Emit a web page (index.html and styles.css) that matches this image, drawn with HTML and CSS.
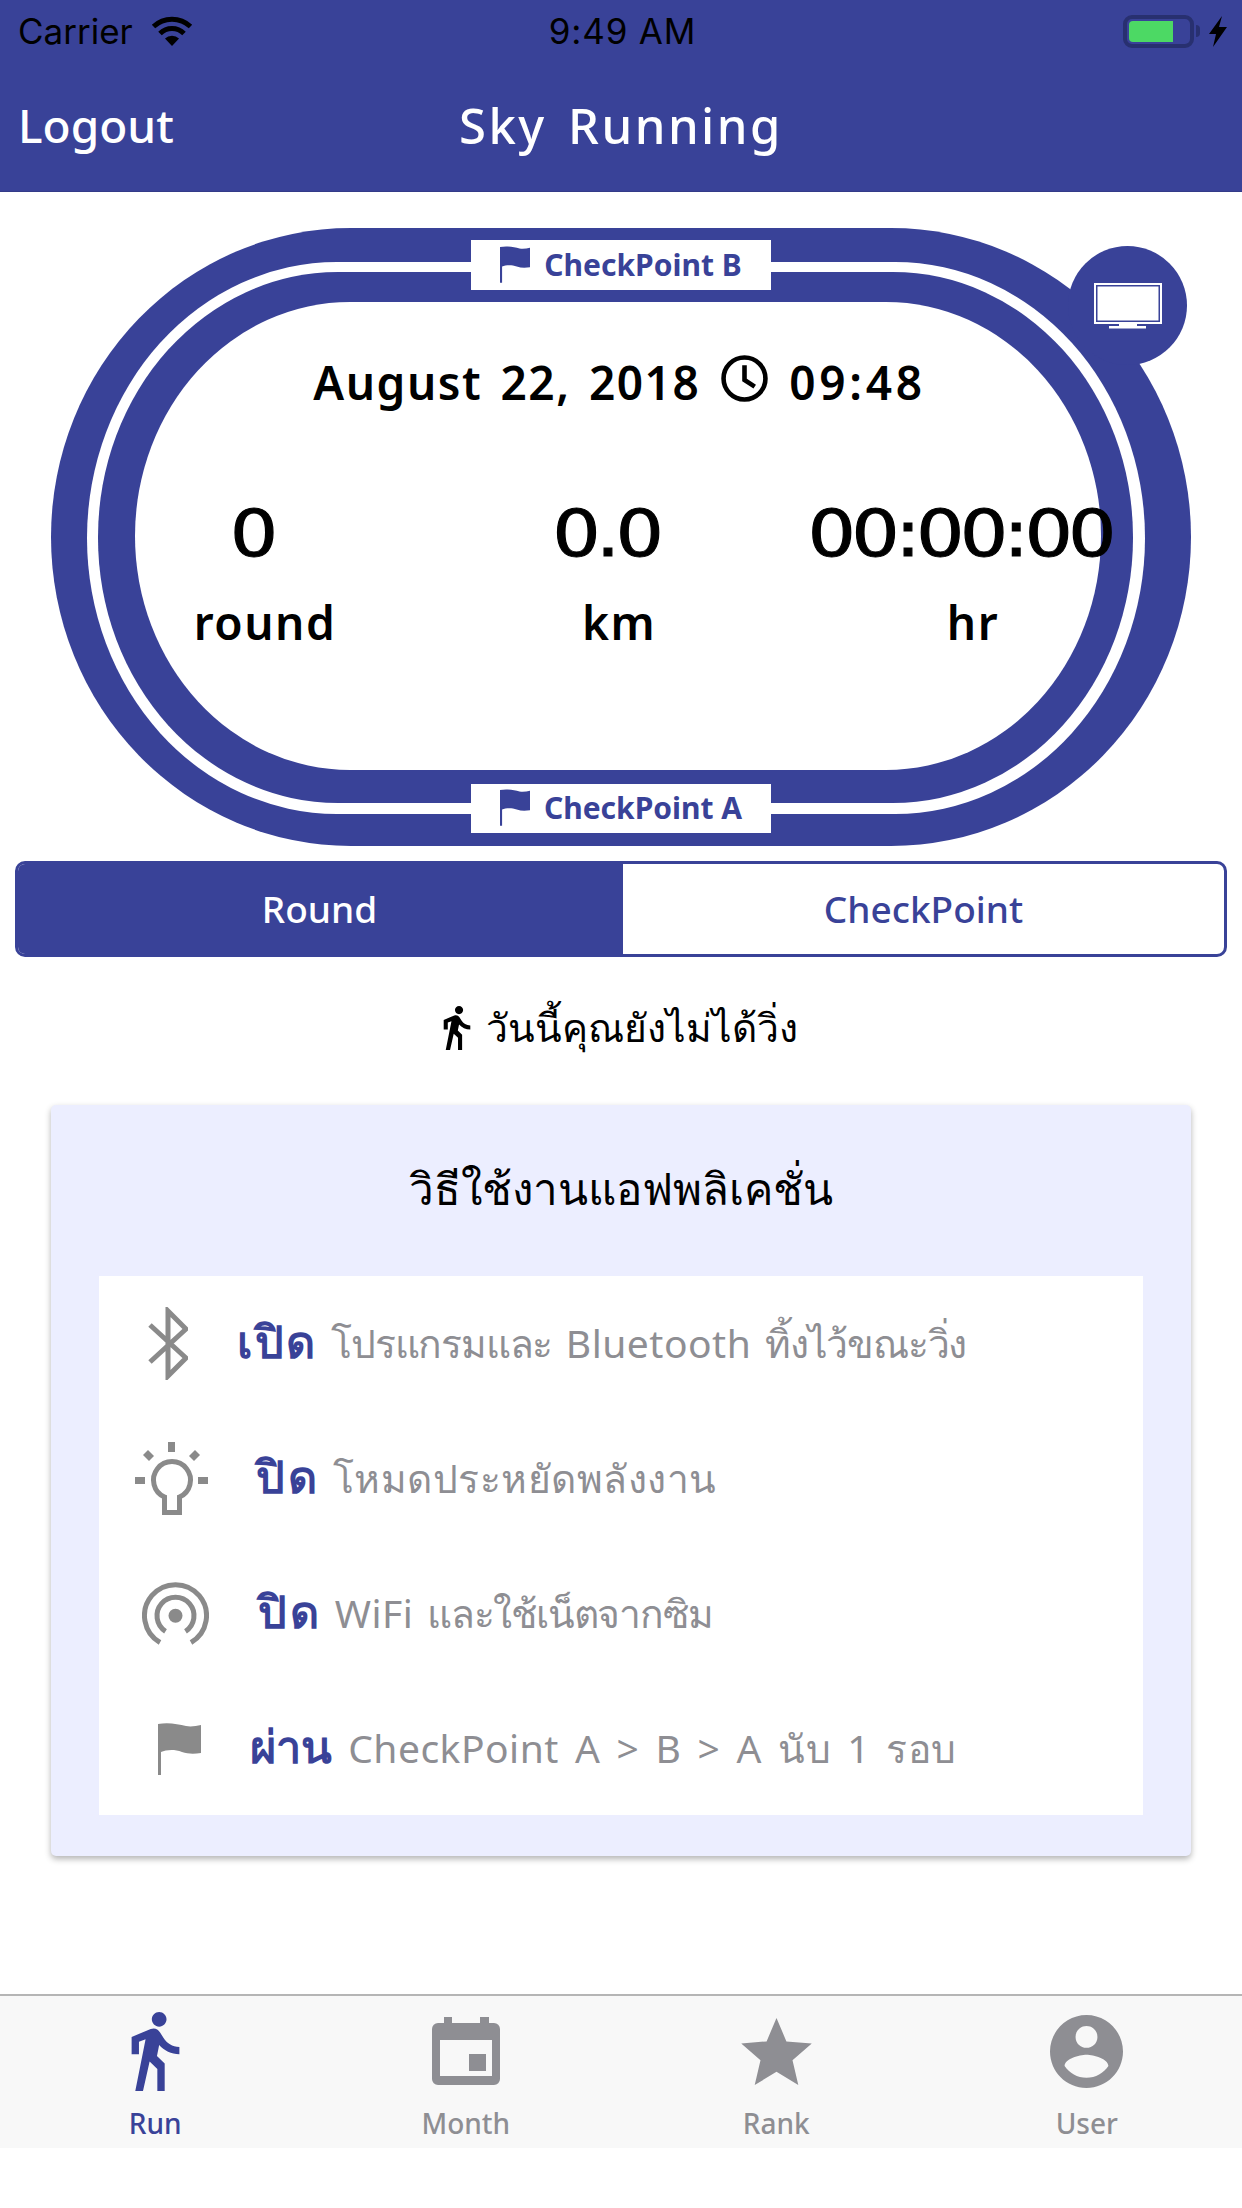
FILE: index.html
```html
<!DOCTYPE html>
<html lang="th">
<head>
  <meta charset="UTF-8">
  <meta name="viewport" content="width=device-width, initial-scale=1.0">
  <title>Sky Running</title>
  <link rel="stylesheet" href="styles.css">
</head>
<body>

<svg class="defs" width="0" height="0">
  <symbol id="walk" viewBox="6 1.5 13 21.5">
    <path d="M13.5 5.5c1.1 0 2-.9 2-2s-.9-2-2-2-2 .9-2 2 .9 2 2 2zM9.8 8.9L7 23h2.1l1.8-8 2.1 2v6h2v-7.5l-2.1-2 .6-3C14.8 12 16.8 13 19 13v-2c-1.9 0-3.5-1-4.3-2.4l-1-1.6c-.4-.6-1-1-1.7-1-.3 0-.5.1-.8.1L6 8.3V13h2V9.6l1.8-.7"/>
  </symbol>
  <symbol id="flag" viewBox="0 0 43 52">
    <path d="M0 1C10 -1 20 1 28 3C33 4 38 3 43 2V30C36 31 30 31 24 29C16 26 8 27 3 29V52H1L0 52Z"/>
  </symbol>
</svg>

<div class="page">

  <header class="top">
    <div class="status">
      <div class="status-left">
        <span>Carrier</span>
        <svg class="wifi" viewBox="0 0 42 30">
          <path class="wifi-arc" d="M2.500 10.500A27 27 0 0 1 39.500 10.500"/>
          <path class="wifi-arc" d="M9 17.500A17 17 0 0 1 33 17.500"/>
          <path d="M21 30L14 22.500A10 10 0 0 1 28 22.500Z"/>
        </svg>
      </div>
      <span class="status-time">9:49 AM</span>
      <div class="status-right">
        <div class="battery"><div class="battery-fill"></div></div>
        <div class="battery-nub"></div>
        <svg class="bolt" viewBox="0 0 18 31"><path d="M13 0L0 18H7L4 31L18 11H10Z"/></svg>
      </div>
    </div>
    <div class="navbar">
      <span class="logout">Logout</span>
      <span class="nav-title">Sky Running</span>
      <span></span>
    </div>
  </header>

  <section class="track">
    <svg class="track-bg" viewBox="0 0 1140 618">
      <rect class="blue" x="0" y="0" width="1140" height="618" rx="300" ry="309"/>
      <rect class="white" x="36" y="34" width="1058" height="552" rx="250" ry="276"/>
      <rect class="blue" x="47" y="44" width="1035" height="531" rx="240" ry="265"/>
      <rect class="white" x="84" y="74" width="966" height="468" rx="215" ry="234"/>
    </svg>

    <div class="badge badge-b">
      <svg class="badge-flag"><use href="#flag"/></svg>
      <span>CheckPoint B</span>
    </div>
    <div class="badge badge-a">
      <svg class="badge-flag"><use href="#flag"/></svg>
      <span>CheckPoint A</span>
    </div>

    <div class="screen-btn">
      <svg class="screen-icon" viewBox="0 0 68 46">
        <rect class="screen-frame" x="1" y="1" width="66" height="39"/>
        <rect x="3.500" y="3.500" width="61" height="34"/>
        <rect x="25" y="40" width="18" height="3.500"/>
        <rect x="15" y="43" width="37" height="2.500"/>
      </svg>
    </div>

    <div class="date-line">
      <span>August 22, 2018</span>
      <svg class="clock" viewBox="0 0 46 46">
        <circle cx="23" cy="23" r="20.500"/>
        <path d="M23 10V24.500L33 31"/>
      </svg>
      <span class="date-time">09:48</span>
    </div>

    <div class="stats">
      <div class="stat"><div class="stat-num">0</div><div class="stat-label">round</div></div>
      <div class="stat"><div class="stat-num">0.0</div><div class="stat-label">km</div></div>
      <div class="stat"><div class="stat-num">00:00:00</div><div class="stat-label">hr</div></div>
    </div>
  </section>

  <div class="segment">
    <div class="seg-item seg-active">Round</div>
    <div class="seg-item">CheckPoint</div>
  </div>

  <div class="today">
    <svg class="today-icon"><use href="#walk"/></svg>
    <span>วันนี้คุณยังไม่ได้วิ่ง</span>
  </div>

  <section class="card">
    <h2 class="card-title">วิธีใช้งานแอฟพลิเคชั่น</h2>
    <div class="howto">
      <div class="row row-bt">
        <svg class="row-icon icon-bt" viewBox="0 0 41 73">
          <path d="M3 18L39 51L21 69V4L39 22L3 55"/>
        </svg>
        <p><b>เปิด</b> <span class="tight">โปรแกรมและ</span> Bluetooth <span class="tight">ทิ้งไว้ขณะวิ่ง</span></p>
      </div>
      <div class="row row-bulb">
        <svg class="row-icon icon-bulb" viewBox="0 0 73 73">
          <path class="line" d="M29.500 70.500V55A18.500 18.500 0 1 1 44.500 55V70.500Z"/>
          <rect x="33" y="0" width="7" height="10"/>
          <rect x="0" y="35" width="10" height="7"/>
          <rect x="63" y="35" width="10" height="7"/>
          <path d="M13 8L19 14L14 19L8 13Z"/>
          <path d="M60 8L54 14L59 19L65 13Z"/>
        </svg>
        <p><b>ปิด</b> โหมดประหยัดพลังงาน</p>
      </div>
      <div class="row row-signal">
        <svg class="row-icon icon-signal" viewBox="0 0 67 63">
          <path class="line" d="M18 60.500A31 31 0 1 1 49 60.500"/>
          <path class="line" d="M23.500 49.300A18.500 18.500 0 1 1 43.500 49.300"/>
          <circle cx="33.500" cy="33.700" r="7"/>
        </svg>
        <p><b>ปิด</b> WiFi <span class="tight">และใช้เน็ตจากซิม</span></p>
      </div>
      <div class="row row-flag">
        <svg class="row-icon icon-flag"><use href="#flag"/></svg>
        <p><b>ผ่าน</b> CheckPoint A &gt; B &gt; A นับ 1 รอบ</p>
      </div>
    </div>
  </section>

  <nav class="tabbar">
    <div class="tab tab-active">
      <div class="tab-icon"><svg class="ic-run"><use href="#walk"/></svg></div>
      <span>Run</span>
    </div>
    <div class="tab">
      <div class="tab-icon">
        <svg class="ic-month" viewBox="0 0 68 68">
          <path fill-rule="evenodd" d="M12 0H20V6H48V0H57V6H62A6 6 0 0 1 68 12V62A6 6 0 0 1 62 68H6A6 6 0 0 1 0 62V12A6 6 0 0 1 6 6H12ZM8 23V59H60V23Z"/>
          <rect x="37" y="37" width="17" height="17"/>
        </svg>
      </div>
      <span>Month</span>
    </div>
    <div class="tab">
      <div class="tab-icon">
        <svg class="ic-star" viewBox="2 2 20 19"><path d="M12 17.270L18.180 21l-1.640-7.030L22 9.240l-7.190-.61L12 2 9.190 8.630 2 9.240l5.460 4.730L5.820 21z"/></svg>
      </div>
      <span>Rank</span>
    </div>
    <div class="tab">
      <div class="tab-icon">
        <svg class="ic-user" viewBox="2 2 20 20"><path d="M12 2C6.480 2 2 6.480 2 12s4.480 10 10 10 10-4.480 10-10S17.520 2 12 2zm0 3c1.660 0 3 1.340 3 3s-1.340 3-3 3-3-1.340-3-3 1.340-3 3-3zm0 14.200c-2.500 0-4.710-1.280-6-3.220.03-1.990 4-3.080 6-3.080 1.990 0 5.970 1.090 6 3.080-1.290 1.940-3.500 3.220-6 3.220z"/></svg>
      </div>
      <span>User</span>
    </div>
  </nav>

</div>

</body>
</html>
```
FILE: styles.css
```css
* { box-sizing: border-box; }
body { margin: 0; background: #fff; font-family: "Noto Sans", sans-serif; color: #000; }
.defs { position: absolute; }
.page { width: 1242px; height: 2208px; display: flex; flex-direction: column; }

/* header */
.top { height: 192px; background: #394298; border-bottom: 1px solid #333b88; }
.status { height: 62px; padding: 0 15px 0 18px; display: grid; grid-template-columns: 1fr auto 1fr; align-items: center; font-family: Inter, sans-serif; font-size: 35px; }
.status-left { display: flex; align-items: center; gap: 18px; }
.status-time { letter-spacing: 0.800px; }
.wifi { width: 42px; height: 30px; }
.wifi-arc { fill: none; stroke: #000; stroke-width: 5px; }
.status-right { display: flex; align-items: center; justify-content: flex-end; }
.battery { width: 71px; height: 33px; border: 4px solid #283070; border-radius: 9px; padding: 2px; }
.battery-fill { width: 44px; height: 100%; background: #4cd964; border-radius: 4px 0 0 4px; }
.battery-nub { width: 4px; height: 12px; margin-left: 2px; background: #283070; border-radius: 0 4px 4px 0; }
.bolt { width: 18px; height: 31px; margin-left: 9px; }
.navbar { height: 129px; padding: 0 18px 4px; display: grid; grid-template-columns: 1fr auto 1fr; align-items: center; color: #fff; font-size: 46px; font-weight: 500; }
.nav-title { font-size: 49px; letter-spacing: 2.500px; word-spacing: 6px; }

/* track */
.track { position: relative; width: 1140px; height: 618px; margin: 36px 0 0 51px; padding-top: 129px; }
.track-bg { position: absolute; left: 0; top: 0; width: 1140px; height: 618px; }
.blue { fill: #394298; }
.white { fill: #fff; }
.badge { position: absolute; left: 420px; width: 300px; padding-bottom: 2px; background: #fff; color: #394298; display: flex; align-items: center; justify-content: center; gap: 14px; font-size: 30px; font-weight: 700; }
.badge-b { top: 12px; height: 50px; }
.badge-a { top: 556px; height: 49px; }
.badge-flag { width: 30px; height: 37px; fill: #394298; }
.screen-btn { position: absolute; left: 1017px; top: 18px; width: 119px; height: 119px; border-radius: 50%; background: #394298; display: flex; align-items: center; justify-content: center; }
.screen-icon { width: 68px; height: 46px; fill: #fff; }
.screen-frame { fill: none; stroke: #fff; stroke-width: 2px; }
.date-line { position: relative; height: 50px; margin-left: -3px; display: flex; align-items: center; justify-content: center; gap: 21px; font-size: 46px; font-weight: 600; letter-spacing: 1.500px; word-spacing: 5px; }
.date-time { letter-spacing: 3.700px; }
.clock { width: 47px; height: 47px; margin-top: -8px; fill: none; stroke: #000; stroke-width: 4.500px; }
.stats { position: relative; display: grid; grid-template-columns: repeat(3, 354px); margin: 87px 0 0 31px; }
.stat { text-align: center; }
.stat-num { height: 80px; padding-right: 12px; line-height: 80px; font-family: "DejaVu Sans", sans-serif; font-size: 64px; letter-spacing: -3.700px; white-space: nowrap; -webkit-text-stroke: 1px #000; transform: scaleX(1.18); }
.stat-label { height: 50px; margin-top: 23px; padding-left: 12px; line-height: 50px; font-size: 46px; font-weight: 600; letter-spacing: 1.500px; }

/* segment */
.segment { height: 96px; margin: 15px 15px 0; display: flex; border: 3px solid #394298; border-radius: 10px; overflow: hidden; font-size: 37px; font-weight: 500; color: #394298; }
.seg-item { flex: 1; padding-bottom: 2px; display: flex; align-items: center; justify-content: center; }
.seg-active { flex: none; width: 605px; padding-right: 2px; background: #394298; color: #fff; }

/* status line */
.today { height: 50px; margin-top: 46px; padding-right: 2px; display: flex; align-items: center; justify-content: center; gap: 15px; font-size: 39px; }
.today-icon { width: 28px; height: 44px; }

/* how to card */
.card { height: 751px; margin: 52px 51px 0; padding: 53px 48px 41px; background: #eceeff; border-radius: 5px; box-shadow: 0 3px 6px rgba(0, 0, 0, 0.3); }
.card-title { height: 60px; margin: 0 0 58px; line-height: 60px; text-align: center; font-size: 44px; font-weight: 500; }
.howto { height: 539px; background: #fff; }
.row { height: 135px; display: flex; align-items: center; }
.row p { margin: -3px 0 0; font-size: 39px; color: #8e8e93; letter-spacing: 0.5px; word-spacing: 3px; }
.row b { font-size: 45px; font-weight: 600; color: #394298; letter-spacing: 2.500px; }
.tight { letter-spacing: -1.200px; }
.row-icon { flex: none; fill: #8a8a8a; }
.row-icon .line, .icon-bt { fill: none; stroke: #8a8a8a; stroke-width: 5px; }
.icon-bt { width: 41px; height: 73px; }
.icon-bulb { width: 73px; height: 73px; }
.icon-signal { width: 67px; height: 63px; }
.icon-flag { width: 43px; height: 52px; }
.row-bt { padding-left: 48px; gap: 49px; }
.row-bulb { padding-left: 36px; gap: 48px; }
.row-signal { padding-left: 43px; gap: 49px; }
.row-flag { padding-left: 59px; gap: 49px; }
.row-flag p { word-spacing: 5.500px; }
.row-flag b { letter-spacing: 0; }

/* tabs */
.tabbar { height: 154px; margin-top: auto; margin-bottom: 60px; display: grid; grid-template-columns: repeat(4, 1fr); background: #f8f8f8; border-top: 2px solid #b5b5b5; }
.tab { display: flex; flex-direction: column; align-items: center; color: #8e8e93; font-size: 28px; font-weight: 500; fill: #8e8e93; }
.tab-icon { height: 108px; padding-top: 16px; display: flex; align-items: flex-start; justify-content: center; }
.tab-active { color: #394298; fill: #394298; }
.ic-run { width: 49px; height: 79px; }
.ic-month { width: 68px; height: 68px; margin-top: 5px; }
.ic-star { width: 71px; height: 67px; margin-top: 6px; }
.ic-user { width: 73px; height: 73px; margin-top: 3px; }
```
